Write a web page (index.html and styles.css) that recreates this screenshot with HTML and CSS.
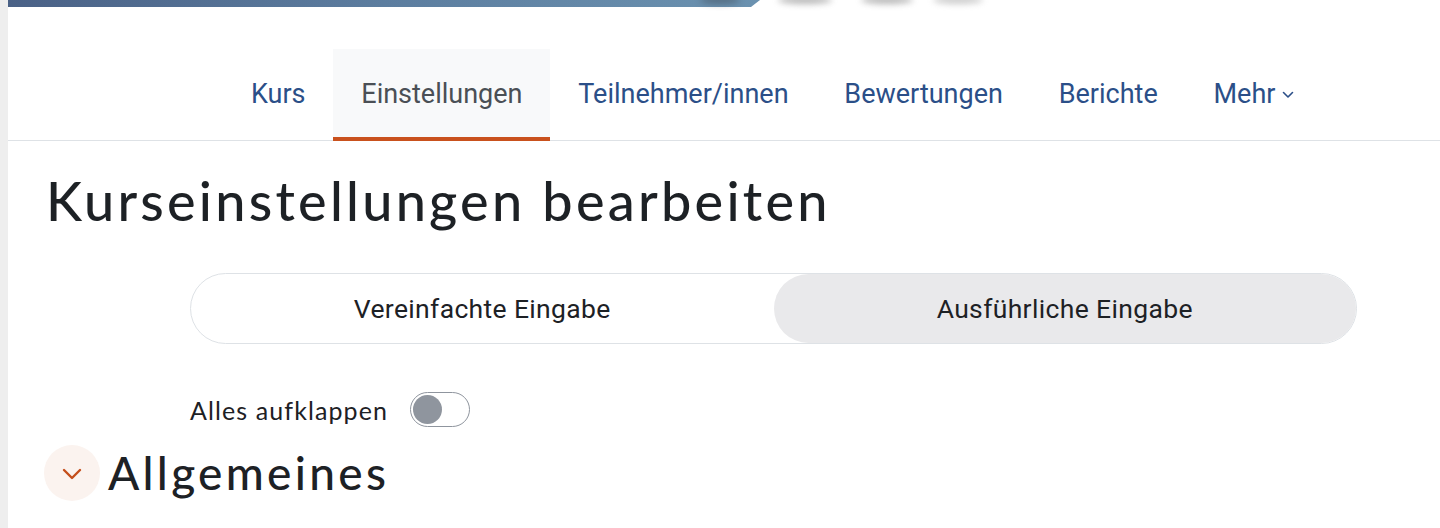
FILE: index.html
```html
<!DOCTYPE html>
<html lang="de">
<head>
<meta charset="utf-8">
<title>Kurseinstellungen bearbeiten</title>
<link rel="stylesheet" href="styles.css">
</head>
<body>
<div class="page">
  <div class="topbar">
    <div class="band"></div>
    <span class="blur b1"></span>
    <span class="blur b2"></span>
    <span class="blur b3"></span>
    <span class="blur b4"></span>
  </div>
  <nav class="secnav">
    <ul class="tabs">
      <li><a class="tab" href="#">Kurs</a></li>
      <li><a class="tab active" href="#">Einstellungen</a></li>
      <li><a class="tab" href="#">Teilnehmer/innen</a></li>
      <li><a class="tab" href="#">Bewertungen</a></li>
      <li><a class="tab" href="#">Berichte</a></li>
      <li><a class="tab" href="#">Mehr<svg class="caret" viewBox="0 0 12 8" width="12" height="8"><path d="M1.5 1.5 L6 6 L10.5 1.5" fill="none" stroke="currentColor" stroke-width="1.6" stroke-linecap="round" stroke-linejoin="round"/></svg></a></li>
    </ul>
  </nav>
  <main class="main">
    <h1 class="title">Kurseinstellungen bearbeiten</h1>
    <div class="form">
      <div class="segmented">
        <button class="seg">Vereinfachte Eingabe</button>
        <button class="seg on">Ausführliche Eingabe</button>
      </div>
      <div class="expandall">
        <span class="label">Alles aufklappen</span>
        <span class="switch"><span class="knob"></span></span>
      </div>
    </div>
    <div class="section">
      <span class="collapse">
        <svg viewBox="0 0 20 12" width="20" height="12"><path d="M2 2 L10 10 L18 2" fill="none" stroke="currentColor" stroke-width="2.4" stroke-linecap="round" stroke-linejoin="round"/></svg>
      </span>
      <h2 class="sectitle">Allgemeines</h2>
    </div>
  </main>
</div>
</body>
</html>
```

FILE: styles.css
```css
html, body {
  margin: 0;
  padding: 0;
}
body {
  background: #eeeeee;
  font-family: Roboto, "Liberation Sans", sans-serif;
  color: #1d2125;
  height: 528px;
  overflow: hidden;
}
.page {
  margin-left: 8px;
  background: #ffffff;
  min-height: 528px;
}
.topbar {
  position: relative;
  height: 7px;
}
.band {
  width: 752px;
  height: 7px;
  background: linear-gradient(90deg, #4a6186 0%, #5c7d9f 50%, #6b92b0 100%);
  clip-path: polygon(0 0, 100% 0, 98.8% 100%, 0 100%);
}
.blur {
  position: absolute;
  top: -4px;
  height: 8px;
  border-radius: 50%;
  background: #9a9a9a;
  filter: blur(3px);
  opacity: 0.7;
}
.b1 { left: 692px; width: 40px; background: #3f4a55; opacity: 0.5; }
.b2 { left: 770px; width: 54px; }
.b3 { left: 853px; width: 52px; }
.b4 { left: 925px; width: 50px; opacity: 0.5; }

.secnav {
  margin-top: 42px;
  border-bottom: 1px solid #dee2e6;
}
.tabs {
  list-style: none;
  margin: 0;
  padding: 0 0 0 215px;
  display: flex;
}
.tab {
  display: flex;
  align-items: center;
  box-sizing: border-box;
  height: 92px;
  padding: 2px 27.9px 0;
  border-bottom: 4px solid transparent;
  margin-bottom: -1px;
  font-size: 27px;
  color: #2b4f88;
  text-decoration: none;
}
.tab.active {
  background: #f8f9fa;
  color: #4a4f55;
  border-bottom-color: #c9511d;
}
.caret {
  margin-left: 7px;
  margin-top: 2px;
}

.main {
  padding: 0 0 0 38px;
}
.title {
  margin: 0;
  padding-top: 24px;
  font-family: Lato, "Noto Sans", sans-serif;
  font-weight: 500;
  font-size: 54px;
  line-height: 72px;
  letter-spacing: 3.25px;
  color: #1d2125;
}
.form {
  margin-left: 144px;
  width: 1167px;
}
.segmented {
  margin-top: 36px;
  display: flex;
  height: 69px;
  border: 1px solid #dee2e6;
  border-radius: 36px;
}
.seg {
  flex: 1;
  border: 0;
  background: transparent;
  border-radius: 36px;
  font-family: Roboto, "Liberation Sans", sans-serif;
  font-size: 26.5px;
  letter-spacing: 0.35px;
  color: #1d2125;
  padding: 0;
}
.seg.on {
  background: #e9e9eb;
}
.expandall {
  margin-top: 48px;
  display: flex;
  align-items: center;
  gap: 22px;
  height: 35px;
}
.label {
  font-family: Lato, "Noto Sans", sans-serif;
  font-size: 25px;
  letter-spacing: 1.1px;
  color: #1d2125;
}
.switch {
  box-sizing: border-box;
  width: 60px;
  height: 35px;
  border: 1.5px solid #8f959e;
  border-radius: 18px;
  display: flex;
  align-items: center;
  padding: 0 1.5px;
}
.knob {
  width: 29px;
  height: 29px;
  border-radius: 50%;
  background: #8f959e;
}
.section {
  margin-top: 16px;
  display: flex;
  align-items: center;
  gap: 8px;
  margin-left: -2px;
}
.collapse {
  width: 56px;
  height: 56px;
  border-radius: 50%;
  background: #fbf3ef;
  color: #c44e1b;
  display: flex;
  align-items: center;
  justify-content: center;
}
.collapse svg {
  margin-top: 2px;
}
.sectitle {
  margin: 0;
  font-family: Lato, "Noto Sans", sans-serif;
  font-weight: 500;
  font-size: 46px;
  line-height: 60px;
  letter-spacing: 3.3px;
  color: #1d2125;
}
```
